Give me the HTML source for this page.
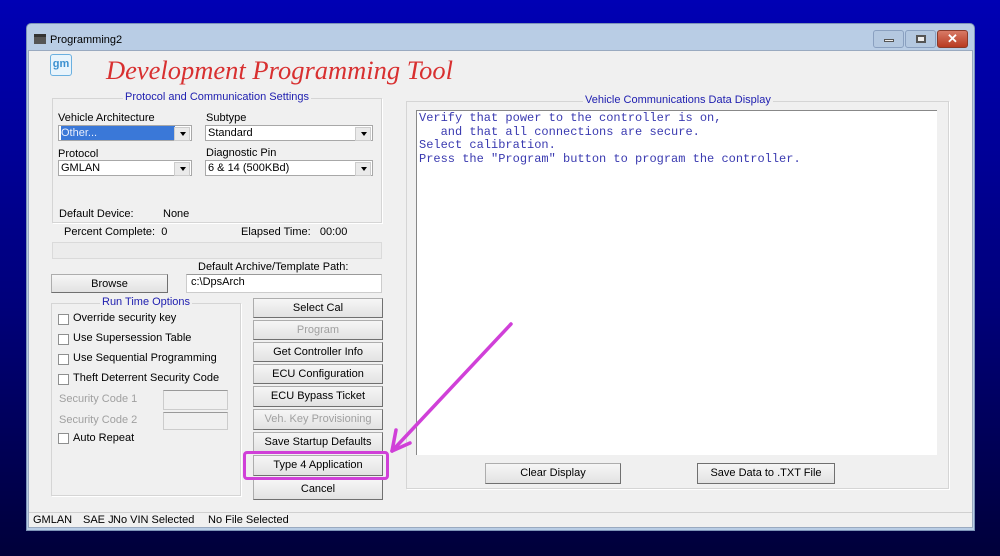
<!DOCTYPE html>
<html><head><style>
*{margin:0;padding:0;box-sizing:border-box}
body{width:1000px;height:556px;overflow:hidden;background:linear-gradient(#0000b4,#00007a 55%,#00003a);font-family:"Liberation Sans",sans-serif;font-size:11px;color:#000;position:relative}
.a{position:absolute}
.win{left:26px;top:23px;width:949px;height:508px;background:#b9cde5;border:1px solid #7d94b8;border-radius:5px 5px 0 0}
.client{left:28px;top:50px;width:945px;height:478px;background:#f0f0f0;border:1px solid #9aaac0}
.grp{border:1px solid #d5d5d5;box-shadow:1px 1px 0 #fff}
.leg{background:#f0f0f0;color:#2020b0;padding:0 2px;font-size:11px}
.combo{background:#fff;border:1px solid #a8a8a8;height:16px;padding-left:2px;line-height:14px}
.combo:after{content:"";position:absolute;right:1px;top:1px;width:14px;height:12px;background:#eaeaea;border:1px solid #ccc}
.combo i{position:absolute;right:5px;top:6px;border:3px solid transparent;border-top:4px solid #000;z-index:2}
.btn{background:linear-gradient(#f6f6f6,#e2e2e2);border:1px solid #adadad;border-right-color:#707070;border-bottom-color:#707070;text-align:center;line-height:18px}
.dis{color:#a0a0a0}
.cb{width:11px;height:11px;border:1px solid #8e8f8f;background:#fff}
.mono{font-family:"Liberation Mono",monospace;font-size:12px;color:#3a3ab0;line-height:13.5px;white-space:pre}
</style></head><body>
<div class="a win"></div>
<div class="a" style="left:34px;top:34px;width:12px;height:10px;background:#555;border-top:3px solid #333"></div>
<div class="a" style="left:50px;top:34px;font-size:11px">Programming2</div>
<div class="a" style="left:873px;top:30px;width:31px;height:18px;background:#b4c8e0;border:1px solid #8aa0c0;border-radius:3px"><div class="a" style="left:10px;top:8px;width:10px;height:3px;background:#eee;border:1px solid #555"></div></div>
<div class="a" style="left:905px;top:30px;width:31px;height:18px;background:#b4c8e0;border:1px solid #8aa0c0;border-radius:3px"><div class="a" style="left:10px;top:4px;width:10px;height:8px;background:#eee;border:2px solid #555"></div></div>
<div class="a" style="left:937px;top:30px;width:31px;height:18px;background:linear-gradient(#d87a66,#b83a22);border:1px solid #8a3a2a;border-radius:3px;color:#fff;text-align:center;font-weight:bold;font-size:13px;line-height:16px">✕</div>
<div class="a client"></div>
<div class="a" style="left:50px;top:54px;width:22px;height:22px;border:1px solid #6ab0e0;border-radius:3px;background:#e8f4fc;color:#3a90d0;font-weight:bold;font-size:11px;text-align:center;line-height:18px">gm</div>
<div class="a" style="left:106px;top:55px;font-family:'Liberation Serif',serif;font-style:italic;font-size:26.5px;color:#d83030">Development Programming Tool</div>

<div class="a grp" style="left:52px;top:98px;width:330px;height:125px"></div>
<div class="a leg" style="left:123px;top:91px">Protocol and Communication Settings</div>
<div class="a" style="left:58px;top:112px">Vehicle Architecture</div>
<div class="a combo" style="left:58px;top:125px;width:134px"><span style="background:#3a78d8;color:#e8eefc;display:inline-block;width:114px">Other...</span><i></i></div>
<div class="a" style="left:206px;top:112px">Subtype</div>
<div class="a combo" style="left:205px;top:125px;width:168px">Standard<i></i></div>
<div class="a" style="left:58px;top:148px">Protocol</div>
<div class="a combo" style="left:58px;top:160px;width:134px">GMLAN<i></i></div>
<div class="a" style="left:206px;top:147px">Diagnostic Pin</div>
<div class="a combo" style="left:205px;top:160px;width:168px">6 &amp; 14 (500KBd)<i></i></div>
<div class="a" style="left:59px;top:208px">Default Device:</div>
<div class="a" style="left:163px;top:208px">None</div>
<div class="a" style="left:64px;top:226px">Percent Complete:&nbsp; 0</div>
<div class="a" style="left:241px;top:226px">Elapsed Time:&nbsp;&nbsp; 00:00</div>
<div class="a" style="left:52px;top:242px;width:330px;height:17px;border:1px solid #dadada;background:#ececec"></div>

<div class="a" style="left:198px;top:261px">Default Archive/Template Path:</div>
<div class="a btn" style="left:51px;top:274px;width:117px;height:19px">Browse</div>
<div class="a" style="left:186px;top:274px;width:196px;height:19px;background:#fff;border:1px solid #ccc;border-top-color:#999;padding:1px 4px">c:\DpsArch</div>

<div class="a grp" style="left:51px;top:303px;width:190px;height:193px"></div>
<div class="a leg" style="left:100px;top:296px">Run Time Options</div>
<div class="a cb" style="left:58px;top:314px"></div><div class="a" style="left:73px;top:312px">Override security key</div>
<div class="a cb" style="left:58px;top:334px"></div><div class="a" style="left:73px;top:332px">Use Supersession Table</div>
<div class="a cb" style="left:58px;top:354px"></div><div class="a" style="left:73px;top:352px">Use Sequential Programming</div>
<div class="a cb" style="left:58px;top:374px"></div><div class="a" style="left:73px;top:372px">Theft Deterrent Security Code</div>
<div class="a dis" style="left:59px;top:393px">Security Code 1</div>
<div class="a" style="left:163px;top:390px;width:65px;height:20px;border:1px solid #ccc;border-top-color:#999"></div>
<div class="a dis" style="left:59px;top:414px">Security Code 2</div>
<div class="a" style="left:163px;top:412px;width:65px;height:18px;border:1px solid #ccc;border-top-color:#999"></div>
<div class="a cb" style="left:58px;top:433px"></div><div class="a" style="left:73px;top:432px">Auto Repeat</div>

<div class="a btn" style="left:253px;top:298px;width:130px;height:20px">Select Cal</div>
<div class="a btn dis" style="left:253px;top:320px;width:130px;height:20px">Program</div>
<div class="a btn" style="left:253px;top:342px;width:130px;height:20px">Get Controller Info</div>
<div class="a btn" style="left:253px;top:364px;width:130px;height:20px">ECU Configuration</div>
<div class="a btn" style="left:253px;top:386px;width:130px;height:21px">ECU Bypass Ticket</div>
<div class="a btn dis" style="left:253px;top:409px;width:130px;height:21px">Veh. Key Provisioning</div>
<div class="a btn" style="left:253px;top:432px;width:130px;height:21px">Save Startup Defaults</div>
<div class="a btn" style="left:253px;top:455px;width:130px;height:21px">Type 4 Application</div>
<div class="a btn" style="left:253px;top:479px;width:130px;height:21px">Cancel</div>
<div class="a" style="left:243px;top:451px;width:146px;height:29px;border:3px solid #d040d8;border-radius:4px"></div>

<div class="a grp" style="left:406px;top:101px;width:543px;height:388px"></div>
<div class="a leg" style="left:583px;top:94px">Vehicle Communications Data Display</div>
<div class="a mono" style="left:416px;top:110px;width:521px;height:345px;background:#fff;border-left:1px solid #888;border-top:1px solid #888;padding:1px 2px">Verify that power to the controller is on,
   and that all connections are secure.
Select calibration.
Press the "Program" button to program the controller.</div>
<div class="a btn" style="left:485px;top:463px;width:136px;height:21px">Clear Display</div>
<div class="a btn" style="left:697px;top:463px;width:138px;height:21px;border:1px solid #707070">Save Data to .TXT File</div>

<div class="a" style="left:29px;top:512px;width:943px;height:16px;border-top:1px solid #d0d0d0"></div>
<div class="a" style="left:33px;top:514px">GMLAN</div>
<div class="a" style="left:83px;top:514px;width:30px;overflow:hidden;white-space:nowrap">SAE J2</div>
<div class="a" style="left:113px;top:514px">No VIN Selected</div>
<div class="a" style="left:208px;top:514px">No File Selected</div>

<svg class="a" style="left:0;top:0" width="1000" height="556"><g stroke="#d040d8" stroke-width="3.5" stroke-linecap="round" fill="none"><path d="M511 324 L392 451"/><path d="M392 451 L396 430 M392 451 L410 443"/></g></svg>
</body></html>
